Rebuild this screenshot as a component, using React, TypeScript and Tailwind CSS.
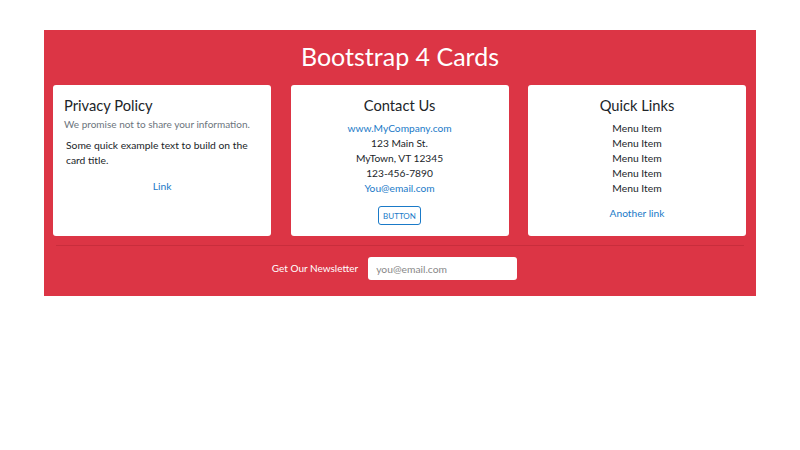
export default function App() {
  const font = { fontFamily: 'Lato, "Open Sans", sans-serif' };
  return (
    <div className="w-[800px] h-[450px] bg-white pt-[30px]" style={font}>
      <div className="ml-[44px] w-[712px] h-[266px] bg-[#dc3545] flex flex-col">
        <h1 className="text-white text-[25px] leading-[34px] text-center mt-[9px]">Bootstrap 4 Cards</h1>

        <div className="flex gap-[19.5px] px-[9px] mt-[12px]">
          {/* privacy */}
          <div className="w-[218px] h-[151px] bg-white rounded-[3px] px-[11px] pt-[10px]">
            <div className="text-[14.7px] leading-[20px] text-[#212529]">Privacy Policy</div>
            <div className="text-[10px] leading-[18px] text-[#6c757d] whitespace-nowrap">We promise not to share your information.</div>
            <p className="text-[10.3px] leading-[14.5px] text-[#212529] mt-[5px] pl-[2px] pr-[4px]">Some quick example text to build on the card title.</p>
            <div className="text-center mt-[12px] text-[10.3px] text-[#1a7ac8]">Link</div>
          </div>

          {/* contact */}
          <div className="w-[218px] h-[151px] bg-white rounded-[3px] pt-[10px] flex flex-col items-center">
            <div className="text-[14.7px] leading-[20px] text-[#212529]">Contact Us</div>
            <div className="mt-[6px] text-[10.2px] leading-[15px] text-center text-[#212529]">
              <div className="text-[#1a7ac8]">www.MyCompany.com</div>
              <div>123 Main St.</div>
              <div>MyTown, VT 12345</div>
              <div>123-456-7890</div>
              <div className="text-[#1a7ac8]">You@email.com</div>
            </div>
            <button className="mt-[10px] w-[43px] h-[19px] border border-[#1a7ac8] rounded-[3px] text-[8px] text-[#1a7ac8] leading-none">BUTTON</button>
          </div>

          {/* quick links */}
          <div className="w-[218px] h-[151px] bg-white rounded-[3px] pt-[10px] flex flex-col items-center">
            <div className="text-[14.7px] leading-[20px] text-[#212529]">Quick Links</div>
            <div className="mt-[6px] text-[10.3px] leading-[15px] text-center text-[#212529]">
              <div>Menu Item</div>
              <div>Menu Item</div>
              <div>Menu Item</div>
              <div>Menu Item</div>
              <div>Menu Item</div>
            </div>
            <div className="mt-[10px] text-[10.2px] leading-[15px] text-[#1a7ac8]">Another link</div>
          </div>
        </div>

        <div className="mx-[12px] mt-[9px] border-t border-[#c92d3c]" />

        <div className="flex items-center justify-center gap-[10px] mt-[11px] pr-[11px]">
          <span className="text-white text-[10px]">Get Our Newsletter</span>
          <input
            placeholder="you@email.com"
            className="w-[149px] h-[23px] bg-white rounded-[3px] px-[8px] text-[10.3px] text-[#212529] placeholder:text-[#888] outline-none"
            style={font}
          />
        </div>
      </div>
    </div>
  );
}
